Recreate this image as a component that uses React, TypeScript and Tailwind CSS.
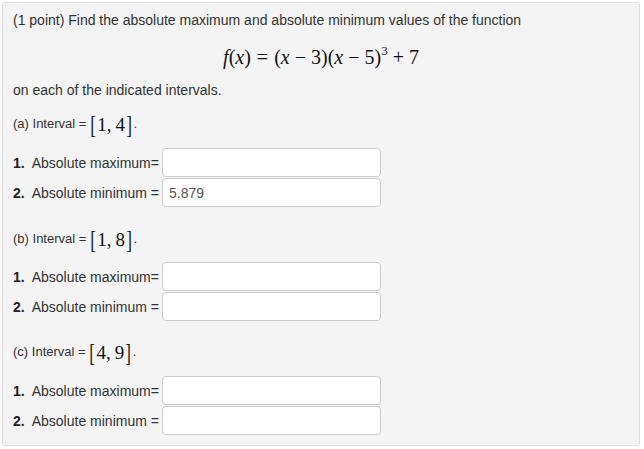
import React from "react";

const serif = { fontFamily: '"Liberation Serif", "DejaVu Serif", serif' };

function I({ children }: { children: React.ReactNode }) {
  return <span className="italic">{children}</span>;
}

function Interval({ label, a, b }: { label: string; a: string; b: string }) {
  return (
    <div className="flex h-[24px] items-center text-[13px]">
      <span className="whitespace-pre">({label}) Interval = </span>
      <span className="flex items-center text-[19px] leading-none text-[#111]" style={serif}>
        <span className="inline-block scale-y-[1.35] scale-x-[0.9]">[</span>
        <span className="ml-[1px]">{a},</span>
        <span className="ml-[4px]">{b}</span>
        <span className="ml-[1px] inline-block scale-y-[1.35] scale-x-[0.9]">]</span>
      </span>
      <span className="ml-[1px]">.</span>
    </div>
  );
}

function Row({ n, label, value }: { n: string; label: string; value?: string }) {
  return (
    <div className="flex h-[30px] items-start">
      <div className="flex h-[29px] w-[149px] shrink-0 items-center whitespace-nowrap">
        <span className="font-bold text-[#222]">{n}.</span>
        <span>&nbsp; {label}</span>
      </div>
      <div className="flex h-[29px] w-[219px] items-center rounded-[4px] border border-[#ccc] bg-white pl-[6px] text-[#555]">
        {value}
      </div>
    </div>
  );
}

export default function App() {
  return (
    <div className="min-h-[449px] w-[644px] bg-white p-[2px]" style={{ fontFamily: '"Liberation Sans", Arial, sans-serif' }}>
      <div className="h-[444px] w-[638px] rounded-[3px] border border-[#ddd] bg-[#f4f4f4] pl-[10px] pt-[7px] text-[14px] leading-[20px] text-[#333]">
        <p>(1 point) Find the absolute maximum and absolute minimum values of the function</p>
        <div className="mt-[13px] flex h-[30px] items-center justify-center pr-[10px] text-[20px] text-[#111]" style={serif}>
          <span className="flex items-baseline whitespace-nowrap">
            <I>f</I>
            <span>(</span>
            <I>x</I>
            <span>)</span>
            <span className="mx-[6px]">=</span>
            <span>(</span>
            <I>x</I>
            <span className="mx-[5px]">−</span>
            <span>3)(</span>
            <I>x</I>
            <span className="mx-[5px]">−</span>
            <span>5)</span>
            <span className="relative -top-[9px] text-[13px]">3</span>
            <span className="mx-[5px]">+</span>
            <span>7</span>
          </span>
        </div>
        <p className="mt-[7px]">on each of the indicated intervals.</p>

        <div className="mt-[12px]">
          <Interval label="a" a="1" b="4" />
        </div>
        <div className="mt-[12px]">
          <Row n="1" label="Absolute maximum=" />
          <Row n="2" label="Absolute minimum =" value="5.879" />
        </div>

        <div className="mt-[19px]">
          <Interval label="b" a="1" b="8" />
        </div>
        <div className="mt-[11px]">
          <Row n="1" label="Absolute maximum=" />
          <Row n="2" label="Absolute minimum =" />
        </div>

        <div className="mt-[18px]">
          <Interval label="c" a="4" b="9" />
        </div>
        <div className="mt-[12px]">
          <Row n="1" label="Absolute maximum=" />
          <Row n="2" label="Absolute minimum =" />
        </div>
      </div>
    </div>
  );
}
